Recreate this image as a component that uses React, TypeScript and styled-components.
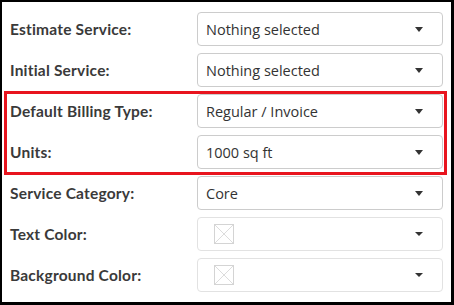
import React from "react";
import styled, { createGlobalStyle } from "styled-components";

const GlobalStyle = createGlobalStyle`
  html, body {
    margin: 0;
    padding: 0;
    background: #ffffff;
  }
`;

interface Field {
  label: string;
  value?: string;
  swatch?: boolean;
}

const Frame = styled.div`
  box-sizing: border-box;
  width: 454px;
  height: 305px;
  border: 2px solid #000;
  border-right-width: 3px;
  border-bottom-width: 3px;
  padding: 10px 8px 0 8px;
  display: flex;
  flex-direction: column;
  gap: 7px;
  background: #fff;
`;

const Highlight = styled.div`
  display: flex;
  flex-direction: column;
  gap: 7px;
  border: 3px solid #e8141e;
  margin: -3px -4px -6px -6px;
  padding: 0 1px 3px 3px;
`;

const Row = styled.div`
  display: grid;
  grid-template-columns: 187px 1fr;
  align-items: center;
  height: 34px;
`;

const Label = styled.label`
  font-family: Lato, "Liberation Sans", sans-serif;
  font-weight: 700;
  font-size: 15.5px;
  letter-spacing: 0.2px;
  color: #3a3a3a;
`;

const SelectBox = styled.div<{ $faint?: boolean }>`
  box-sizing: border-box;
  height: 34px;
  border: 1px solid ${(p) => (p.$faint ? "#e2e2e2" : "#cccccc")};
  border-radius: 4px;
  display: flex;
  align-items: center;
  padding: 0 19px 0 8px;
  font-family: "Open Sans", "Liberation Sans", sans-serif;
  font-size: 14.5px;
  color: #333;
`;

const Value = styled.span`
  flex: 1;
  white-space: nowrap;
`;

const Caret = styled.span<{ $small?: boolean }>`
  width: 0;
  height: 0;
  border-left: ${(p) => (p.$small ? 4 : 4.5)}px solid transparent;
  border-right: ${(p) => (p.$small ? 4 : 4.5)}px solid transparent;
  border-top: ${(p) => (p.$small ? 4 : 5)}px solid #333;
`;

const Swatch = styled.span`
  margin-left: 8px;
  flex: none;
  width: 20px;
  height: 20px;
  display: block;
`;

const SwatchWrap = styled.span`
  flex: 1;
  display: flex;
  align-items: center;
`;

const EmptySwatch = () => (
  <Swatch>
    <svg width="20" height="20" viewBox="0 0 20 20">
      <rect x="0.5" y="0.5" width="19" height="19" fill="#fff" stroke="#d4d4d4" />
      <line x1="1" y1="1" x2="19" y2="19" stroke="#dcdcdc" />
      <line x1="19" y1="1" x2="1" y2="19" stroke="#dcdcdc" />
    </svg>
  </Swatch>
);

const FieldRow = ({ label, value, swatch }: Field) => (
  <Row>
    <Label>{label}</Label>
    <SelectBox $faint={swatch}>
      {swatch ? (
        <SwatchWrap>
          <EmptySwatch />
        </SwatchWrap>
      ) : (
        <Value>{value}</Value>
      )}
      <Caret $small={swatch} />
    </SelectBox>
  </Row>
);

const topFields: Field[] = [
  { label: "Estimate Service:", value: "Nothing selected" },
  { label: "Initial Service:", value: "Nothing selected" },
];

const highlighted: Field[] = [
  { label: "Default Billing Type:", value: "Regular / Invoice" },
  { label: "Units:", value: "1000 sq ft" },
];

const bottomFields: Field[] = [
  { label: "Service Category:", value: "Core" },
  { label: "Text Color:", swatch: true },
  { label: "Background Color:", swatch: true },
];

export default function App() {
  return (
    <>
      <GlobalStyle />
      <Frame>
        {topFields.map((f) => (
          <FieldRow key={f.label} {...f} />
        ))}
        <Highlight>
          {highlighted.map((f) => (
            <FieldRow key={f.label} {...f} />
          ))}
        </Highlight>
        {bottomFields.map((f) => (
          <FieldRow key={f.label} {...f} />
        ))}
      </Frame>
    </>
  );
}
